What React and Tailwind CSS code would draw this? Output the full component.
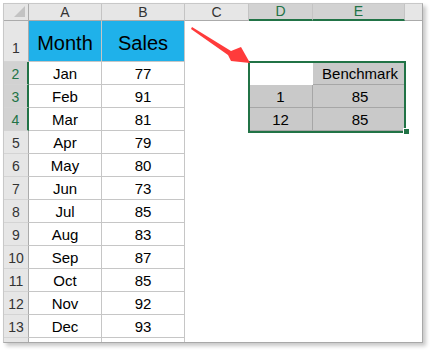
import React from 'react';

const months = [
  ['Jan', 77], ['Feb', 91], ['Mar', 81], ['Apr', 79], ['May', 80], ['Jun', 73],
  ['Jul', 85], ['Aug', 83], ['Sep', 87], ['Oct', 85], ['Nov', 92], ['Dec', 93],
];

// selected range D2:E4 (rows 2..4)
const picked = {
  2: [null, 'Benchmark'],
  3: ['1', '85'],
  4: ['12', '85'],
};

const RowHead = ({ n, active, tall }) => (
  <div
    className={`w-[25px] shrink-0 flex justify-center border-b border-[#d4d4d4] text-[14px] ${
      tall ? 'h-[41px] items-end pb-[2px]' : 'h-[23px] items-center pt-[2px]'
    } ${
      active
        ? 'bg-[#d2d2d2] text-[#217346] border-r-2 border-r-[#217346]'
        : 'bg-[#e6e6e6] text-[#333] border-r border-r-[#ababab]'
    }`}
  >
    {n}
  </div>
);

const ColHead = ({ w, label, active }) => (
  <div
    className={`${w} h-full shrink-0 flex items-center justify-center border-r border-[#c4c4c4] text-[14px] ${
      active
        ? 'bg-[#d2d2d2] text-[#217346] border-b-2 border-b-[#217346]'
        : 'bg-[#e6e6e6] text-[#333] border-b border-b-[#ababab]'
    }`}
  >
    {label}
  </div>
);

export default function App() {
  return (
    <div
      className="relative w-[431px] h-[351px] bg-white p-[3px]"
      style={{ fontFamily: '"Liberation Sans", Arial, sans-serif' }}
    >
      <div className="relative w-[420px] h-[340px] border border-[#c8c8c8] border-r-[#a8a8a8] border-b-[#a8a8a8] overflow-hidden shadow-[3px_3px_4px_rgba(0,0,0,0.22)] bg-white">
        {/* column headers */}
        <div className="flex h-[17px]">
          <div className="w-[25px] h-full shrink-0 relative bg-[#e6e6e6] border-r border-b border-[#ababab]">
            <div className="absolute right-[3px] bottom-[3px] w-0 h-0 border-l-[11px] border-l-transparent border-b-[11px] border-b-[#c3c3c3]" />
          </div>
          <ColHead w="w-[73px]" label="A" />
          <ColHead w="w-[83px]" label="B" />
          <ColHead w="w-[64px]" label="C" />
          <ColHead w="w-[64px]" label="D" active />
          <ColHead w="w-[92px]" label="E" active />
          <ColHead w="w-[30px]" label="" />
        </div>

        {/* row 1 */}
        <div className="flex">
          <RowHead n={1} tall />
          <div className="w-[73px] h-[41px] shrink-0 flex items-center justify-center bg-[#1fb1ea] border-r border-b border-[#c6c6c6] text-[20px] text-black pt-[3px]">
            Month
          </div>
          <div className="w-[83px] h-[41px] shrink-0 flex items-center justify-center bg-[#1fb1ea] border-r border-b border-[#c6c6c6] text-[20px] text-black pt-[3px]">
            Sales
          </div>
        </div>

        {/* rows 2..13, plus the clipped edge of row 14 */}
        {[...months, ['', '']].map(([m, v], i) => {
          const n = i + 2;
          const sel = picked[n];
          return (
            <div key={n} className="flex">
              <RowHead n={n < 14 ? n : ''} active={!!sel} />
              <div className="w-[73px] h-[23px] shrink-0 flex items-center justify-center border-r border-b border-[#c6c6c6] text-[15px] text-black pt-[2px]">
                {m}
              </div>
              <div className="w-[83px] h-[23px] shrink-0 flex items-center justify-center border-r border-b border-[#c6c6c6] text-[15px] text-black pt-[2px]">
                {v}
              </div>
              <div className="w-[64px] h-[23px] shrink-0" />
              {sel && (
                <>
                  <div
                    className={`w-[64px] h-[23px] shrink-0 flex items-center justify-center text-[15px] text-black pt-[2px] ${
                      sel[0] === null ? 'bg-white' : 'bg-[#c9c9c9] border-r border-b border-[#a6a6a6]'
                    }`}
                  >
                    {sel[0]}
                  </div>
                  <div className="w-[92px] h-[23px] shrink-0 flex items-center justify-center bg-[#c9c9c9] border-b border-[#a6a6a6] text-[15px] text-black pt-[2px] pl-[2px]">
                    {sel[1]}
                  </div>
                </>
              )}
            </div>
          );
        })}

        {/* selection outline D2:E4 */}
        <div className="absolute left-[244px] top-[57px] w-[158px] h-[72px] border-2 border-[#217346]" />
        <div className="absolute left-[399px] top-[124px] w-[7px] h-[7px] bg-[#217346] border border-white" />
      </div>

      {/* red arrow */}
      <svg className="absolute left-0 top-0 pointer-events-none" width="431" height="351">
        <polygon
          points="192,27 231,51 241,47 250,63 231,61 228,55 191,29"
          fill="#ff3b3b"
        />
      </svg>
    </div>
  );
}
